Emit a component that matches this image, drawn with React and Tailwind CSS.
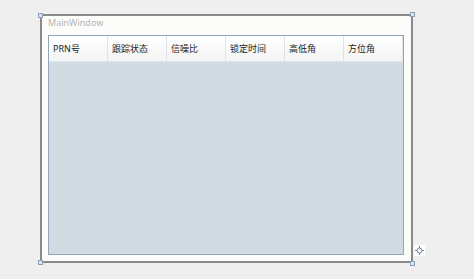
import React from "react";

const cols = ["PRN号", "跟踪状态", "信噪比", "锁定时间", "高低角", "方位角"];

function Handle({ className }) {
  return (
    <div
      className={`absolute w-[5px] h-[5px] border border-[#8ea0b8] bg-[#dde4ee] ${className}`}
    />
  );
}

export default function App() {
  return (
    <div
      className="w-[474px] h-[279px] bg-[#efefef] relative overflow-hidden"
      style={{ fontFamily: '"Noto Sans", "Noto Sans CJK SC", sans-serif' }}
    >
      <div className="pl-[40px] pt-[14px]">
        <div className="relative w-[373px] h-[249px] border-2 border-[#8a8a8a] bg-[#fcfcfb]">
          <div className="pl-[6px] h-[19px] text-[9px] leading-[14px] text-[#b4b4b4]">
            MainWindow
          </div>
          <div className="ml-[6px] w-[356px] h-[220px] border border-[#93a6b8] bg-[#d0dce2] flex flex-col">
            <div className="flex h-[26px] bg-gradient-to-b from-white to-[#f3f4f5] border-b border-[#e2e6ea]">
              {cols.map((c) => (
                <div
                  key={c}
                  className="w-[59px] h-full border-r border-[#dfe3e7] pl-[4px] flex items-center text-[9px] text-[#222]"
                >
                  {c}
                </div>
              ))}
            </div>
          </div>
          <Handle className="-left-[4px] -top-[3px]" />
          <Handle className="-right-[4px] -top-[4px]" />
          <Handle className="-left-[4px] -bottom-[4px]" />
          <Handle className="-right-[4px] -bottom-[5px]" />
          <div className="absolute -right-[14px] bottom-[5px] w-[11px] h-[11px] bg-white flex items-center justify-center">
            <svg width="11" height="11" viewBox="0 0 11 11">
              <circle cx="5.5" cy="5.5" r="2.5" fill="none" stroke="#6f7f99" strokeWidth="1" />
              <line x1="5.5" y1="1" x2="5.5" y2="3" stroke="#6f7f99" />
              <line x1="5.5" y1="8" x2="5.5" y2="10" stroke="#6f7f99" />
              <line x1="1" y1="5.5" x2="3" y2="5.5" stroke="#6f7f99" />
              <line x1="8" y1="5.5" x2="10" y2="5.5" stroke="#6f7f99" />
            </svg>
          </div>
        </div>
      </div>
    </div>
  );
}
